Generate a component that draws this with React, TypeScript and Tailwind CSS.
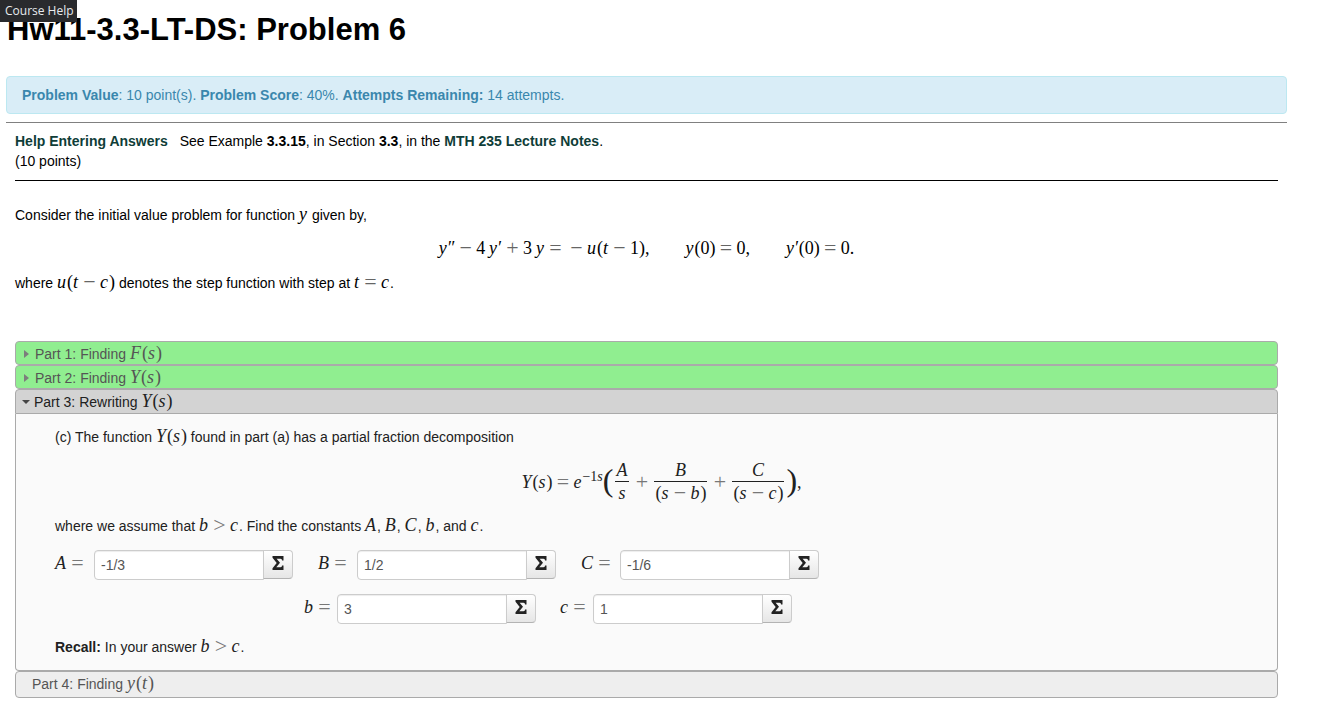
import { useState, type ReactNode } from 'react';
import clsx from 'clsx';

type WithChildren = { children: ReactNode };

// Math variable
function V({ children }: WithChildren) {
  return <i className="pr-px font-['Liberation_Serif',serif] text-lg leading-none">{children}</i>;
}

// Upright math: digits, parentheses, punctuation
function N({ children }: WithChildren) {
  return <span className="font-['Liberation_Serif',serif] text-lg leading-none">{children}</span>;
}

// Relation or binary operator, with the thin space on both sides.
// The short line height keeps it from stretching the line it sits in.
function Op({ children }: WithChildren) {
  return (
    <span className="mx-1 inline-block w-[13px] text-center align-[-1px] font-['Liberation_Serif',serif] text-[22px] leading-3 opacity-60">
      {children}
    </span>
  );
}

function Frac({ top, bottom }: { top: ReactNode; bottom: ReactNode }) {
  return (
    <span className="mx-0.5 inline-flex flex-col items-stretch text-center leading-none">
      <span className="border-b border-current px-px pb-0.5">{top}</span>
      <span className="px-px pt-0.5">{bottom}</span>
    </span>
  );
}

// Parenthesis tall enough to wrap a fraction
function BigParen({ children }: WithChildren) {
  return <span className="pb-1 font-['Liberation_Serif',serif] text-[32px] leading-none">{children}</span>;
}

// name(arg)
function Fn({ name, arg }: { name: string; arg: string }) {
  return (
    <>
      <V>{name}</V>
      <N>(</N>
      <V>{arg}</V>
      <N>)</N>
    </>
  );
}

function SigmaIcon() {
  return (
    <svg viewBox="0 0 12 14" className="h-[14px] w-3" fill="currentColor" aria-hidden="true">
      <path d="M.5 0h11v4.500h-1.500c0-1-.5-1.700-1.500-1.700H4.600L8 6.800 4.300 11.200h4.200c1 0 1.500-.7 1.500-1.700h1.500V14H.5v-1.800L4.700 7 .5 1.800z" />
    </svg>
  );
}

function AnswerField({ id, name, initial, narrow }: { id: string; name: string; initial: string; narrow?: boolean }) {
  const [value, setValue] = useState(initial);
  return (
    <div className="flex">
      <label htmlFor={id} className={clsx('flex h-[26px] items-center', narrow ? 'w-[33px]' : 'w-[39px]')}>
        <V>{name}</V>
        <Op>=</Op>
      </label>
      <input
        id={id}
        type="text"
        value={value}
        onChange={(e) => setValue(e.target.value)}
        className="h-[30px] w-[170px] rounded-l border border-[#ccc] bg-white px-1.5 text-sm text-[#555] shadow-[inset_0_1px_1px_rgba(0,0,0,0.075)] outline-none"
      />
      <button
        type="button"
        aria-label={`Equation editor for ${name}`}
        className="-ml-px flex h-[29px] w-[30px] items-center justify-center rounded-r border border-[#ccc] border-b-[#b3b3b3] bg-linear-to-b from-white to-[#e6e6e6] pb-1 text-[#222]"
      >
        <SigmaIcon />
      </button>
    </div>
  );
}

type PartHeaderProps = WithChildren & {
  state: 'done' | 'open' | 'locked';
};

function PartHeader({ state, children }: PartHeaderProps) {
  return (
    <button
      type="button"
      aria-expanded={state === 'open'}
      className={clsx(
        'flex w-full items-center border border-[#aaa] text-left',
        state === 'done' && 'h-6 rounded bg-[#90ee90] pl-2 pt-0.5 text-[#555]',
        state === 'open' && 'h-[25px] rounded-t bg-[#d3d3d3] pl-1.5 text-[#212121]',
        state === 'locked' && 'h-[27px] rounded bg-[#eee] pb-0.5 pl-4 text-[#555]'
      )}
    >
      {state === 'done' && (
        <svg viewBox="0 0 5 8" className="mr-1.5 h-2 w-[5px] shrink-0" fill="#7d7d7d" aria-hidden="true">
          <path d="M0 0l5 4-5 4z" />
        </svg>
      )}
      {state === 'open' && (
        <svg viewBox="0 0 8 4" className="mr-1 h-1 w-2 shrink-0" fill="#454545" aria-hidden="true">
          <path d="M0 0h8L4 4z" />
        </svg>
      )}
      <span>{children}</span>
    </button>
  );
}

export default function App() {
  return (
    <div className="min-h-screen bg-white pb-5 pl-1.5 pr-[30px] font-['Liberation_Sans',Arial,sans-serif] text-sm leading-5 text-black">
      <a
        href="#help"
        className="absolute left-0 top-0 z-10 flex h-[22px] w-[77px] items-center bg-[#292a2d] pl-[5px] font-['Open_Sans',sans-serif] text-xs text-[#e8eaed]"
      >
        Course Help
      </a>
      <h1 className="pl-px pt-2.5 text-[31px] font-bold leading-10">Hw11-3.3-LT-DS: Problem 6</h1>

      <div className="mt-[26px] rounded border border-[#bce8f1] bg-[#d9edf7] py-2 pl-[15px] pr-9 text-[#3a87ad]">
        <b>Problem Value</b>: 10 point(s). <b>Problem Score</b>: 40%. <b>Attempts Remaining:</b> 14 attempts.
      </div>

      <main className="mt-2 border-t border-[#808080] px-[9px] pt-2">
        <p>
          <a href="#entering" className="mr-2 font-bold text-[#0f3d38]">Help Entering Answers</a> See Example{' '}
          <b>3.3.15</b>, in Section <b>3.3</b>, in the{' '}
          <a href="#notes" className="font-bold text-[#0f3d38]">MTH 235 Lecture Notes</a>.
          <br />
          (10 points)
        </p>
        <hr className="mt-[9px] border-black" />

        <p className="mt-6 h-5">
          Consider the initial value problem for function <V>y</V> given by,
        </p>
        <div className="flex h-12 items-center justify-center gap-9">
          <span>
            <V>y″</V>
            <Op>−</Op>
            <N>4</N> <V>y′</V>
            <Op>+</Op>
            <N>3</N> <V>y</V>
            <Op>=</Op>
            <Op>−</Op>
            <V>u</V>
            <N>(</N>
            <V>t</V>
            <Op>−</Op>
            <N>1),</N>
          </span>
          <span>
            <V>y</V>
            <N>(0)</N>
            <Op>=</Op>
            <N>0,</N>
          </span>
          <span>
            <V>y′</V>
            <N>(0)</N>
            <Op>=</Op>
            <N>0.</N>
          </span>
        </div>
        <p className="h-5">
          where <V>u</V>
          <N>(</N>
          <V>t</V>
          <Op>−</Op>
          <V>c</V>
          <N>)</N> denotes the step function with step at <V>t</V>
          <Op>=</Op>
          <V>c</V>.
        </p>

        <div className="mt-12">
          <PartHeader state="done">
            Part 1: Finding <Fn name="F" arg="s" />
          </PartHeader>
          <PartHeader state="done">
            Part 2: Finding <Fn name="Y" arg="s" />
          </PartHeader>
          <PartHeader state="open">
            Part 3: Rewriting <Fn name="Y" arg="s" />
          </PartHeader>
          <section className="rounded-b border border-t-0 border-[#aaa] bg-[#fafafa] pb-[13px] pl-[39px] pr-[9px] pt-[13px] text-[#212121]">
            <p className="h-5">
              (c) The function <Fn name="Y" arg="s" /> found in part (a) has a partial fraction decomposition
            </p>
            <div className="flex h-[69px] items-center justify-center">
              <Fn name="Y" arg="s" />
              <Op>=</Op>
              <V>e</V>
              <span className="pb-2.5 font-['Liberation_Serif',serif] text-sm leading-none">
                −1<i>s</i>
              </span>
              <BigParen>(</BigParen>
              <Frac top={<V>A</V>} bottom={<V>s</V>} />
              <Op>+</Op>
              <Frac
                top={<V>B</V>}
                bottom={
                  <>
                    <N>(</N>
                    <V>s</V>
                    <Op>−</Op>
                    <V>b</V>
                    <N>)</N>
                  </>
                }
              />
              <Op>+</Op>
              <Frac
                top={<V>C</V>}
                bottom={
                  <>
                    <N>(</N>
                    <V>s</V>
                    <Op>−</Op>
                    <V>c</V>
                    <N>)</N>
                  </>
                }
              />
              <BigParen>)</BigParen>
              <N>,</N>
            </div>
            <p className="h-5">
              where we assume that <V>b</V>
              <Op>&gt;</Op>
              <V>c</V>. Find the constants <V>A</V>, <V>B</V>, <V>C</V>, <V>b</V>, and <V>c</V>.
            </p>
            <div className="mt-3.5 flex gap-[25px]">
              <AnswerField id="ans-A" name="A" initial="-1/3" />
              <AnswerField id="ans-B" name="B" initial="1/2" />
              <AnswerField id="ans-C" name="C" initial="-1/6" />
            </div>
            <div className="mt-3.5 flex gap-6 pl-[249px]">
              <AnswerField id="ans-b" name="b" initial="3" narrow />
              <AnswerField id="ans-c" name="c" initial="1" narrow />
            </div>
            <p className="mt-[13px] h-5">
              <b>Recall:</b> In your answer <V>b</V>
              <Op>&gt;</Op>
              <V>c</V>.
            </p>
          </section>
          <PartHeader state="locked">
            Part 4: Finding <Fn name="y" arg="t" />
          </PartHeader>
        </div>
      </main>
    </div>
  );
}
